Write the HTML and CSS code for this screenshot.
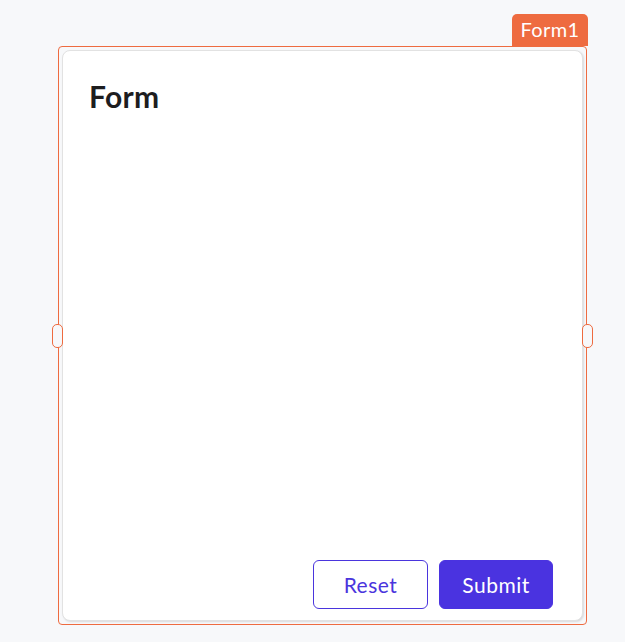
FILE: index.html
```html
<!DOCTYPE html>
<html>
<head>
<meta charset="utf-8">
<link rel="stylesheet" href="styles.css">
</head>
<body>
<div class="canvas">
  <div class="widget">
    <div class="tag">Form1</div>
    <div class="frame">
      <div class="card">
        <h1 class="title">Form</h1>
        <div class="spacer"></div>
        <div class="actions">
          <button class="btn btn-outline">Reset</button>
          <button class="btn btn-primary">Submit</button>
        </div>
      </div>
    </div>
    <div class="handle handle-left"></div>
    <div class="handle handle-right"></div>
  </div>
</div>
</body>
</html>
```
FILE: styles.css
```css
html, body {
  margin: 0;
  padding: 0;
  background: #f7f8fa;
  font-family: "Lato", "Noto Sans", sans-serif;
}
.canvas {
  padding: 46px 0 0 58px;
  height: 596px;
}
.widget {
  position: relative;
  width: 529px;
}
.tag {
  position: absolute;
  top: -32px;
  right: -1px;
  width: 76px;
  height: 32px;
  box-sizing: border-box;
  background: #ee6b40;
  color: #fff;
  border-radius: 5px 5px 0 0;
  font-size: 20px;
  letter-spacing: 0.4px;
  line-height: 31px;
  text-align: center;
}
.frame {
  height: 579px;
  box-sizing: border-box;
  border: 1px solid #ee6b40;
  border-radius: 4px;
  padding: 3px;
  display: flex;
}
.card {
  flex: 1;
  background: #fff;
  border: 1px solid #e2e2e2;
  border-radius: 8px;
  box-shadow: 1px 1px 2px rgba(0,0,0,0.12);
  display: flex;
  flex-direction: column;
  padding: 25px 29px 11px 26px;
}
.title {
  margin: 0;
  font-size: 30px;
  font-weight: 700;
  letter-spacing: 0.3px;
  color: #1d1d1f;
  line-height: 40px;
}
.spacer { flex: 1; }
.actions {
  display: flex;
  justify-content: flex-end;
  gap: 11px;
}
.btn {
  font-family: "Lato", "Noto Sans", sans-serif;
  font-size: 21px;
  letter-spacing: 0.5px;
  height: 49px;
  width: 115px;
  padding: 0;
  border-radius: 6px;
  box-sizing: border-box;
  cursor: pointer;
}
.btn-outline {
  background: #fff;
  color: #4a35dd;
  border: 1px solid #4a35dd;
}
.btn-primary {
  background: #4a33e0;
  color: #fff;
  border: 1px solid #4a33e0;
  width: 114px;
}
.handle {
  position: absolute;
  top: 278px;
  width: 11px;
  height: 24px;
  box-sizing: border-box;
  background: #f7f8fa;
  border: 1px solid #ee6b40;
  border-radius: 5px;
}
.handle-left { left: -6px; }
.handle-right { right: -6px; }
```
